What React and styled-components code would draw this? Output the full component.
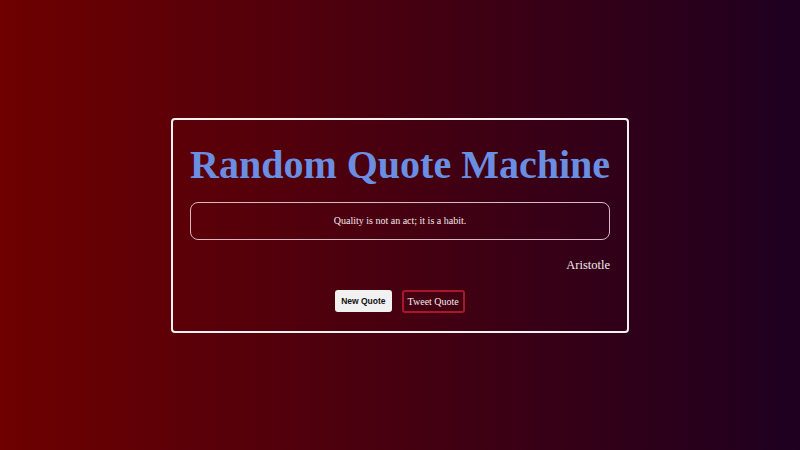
import React from 'react';
import styled, { createGlobalStyle } from 'styled-components';

const GlobalStyle = createGlobalStyle`
  html, body {
    margin: 0;
    height: 100%;
  }
  body {
    font-family: "Liberation Serif", "Times New Roman", serif;
    background: linear-gradient(to right, #6e0000, #1e0020);
  }
`;

const Page = styled.div`
  width: 800px;
  height: 450px;
  display: flex;
  align-items: center;
  justify-content: center;
`;

const Card = styled.div`
  width: 420px;
  padding: 9px 17px 18px;
  border: 2px solid #f2f2f2;
  border-radius: 4px;
  display: flex;
  flex-direction: column;
`;

const Title = styled.h1`
  margin: 12px 0 14px;
  font-size: 40px;
  font-weight: bold;
  color: #6a8fe2;
  text-align: center;
  white-space: nowrap;
`;

const QuoteBox = styled.div`
  border: 1px solid #d9b9c4;
  border-radius: 8px;
  padding: 11px 10px;
  text-align: center;
  font-size: 10px;
  line-height: 14px;
  color: #f3e6ea;
`;

const Author = styled.p`
  margin: 17px 0 16px;
  text-align: right;
  font-size: 12.5px;
  line-height: 17px;
  color: #f2eaee;
`;

const Buttons = styled.div`
  display: flex;
  justify-content: center;
  align-items: center;
  gap: 10px;
`;

const Button = styled.button`
  border-radius: 3px;
  cursor: pointer;
  ${({ $tweet }) => $tweet
    ? `
      height: 23px;
      padding: 0 4px;
      background: transparent;
      border: 2px solid #a8182c;
      color: #f4eaea;
      font-family: "Liberation Serif", serif;
      font-size: 10px;
    `
    : `
      height: 22px;
      padding: 0 6px;
      background: #f1f1f1;
      border: none;
      color: #111;
      font-family: "Liberation Sans", Arial, sans-serif;
      font-weight: bold;
      font-size: 8.5px;
    `}
`;

export default function App() {
  return (
    <>
      <GlobalStyle />
      <Page>
        <Card>
          <Title>Random Quote Machine</Title>
          <QuoteBox>Quality is not an act; it is a habit.</QuoteBox>
          <Author>Aristotle</Author>
          <Buttons>
            <Button>New Quote</Button>
            <Button $tweet>Tweet Quote</Button>
          </Buttons>
        </Card>
      </Page>
    </>
  );
}
